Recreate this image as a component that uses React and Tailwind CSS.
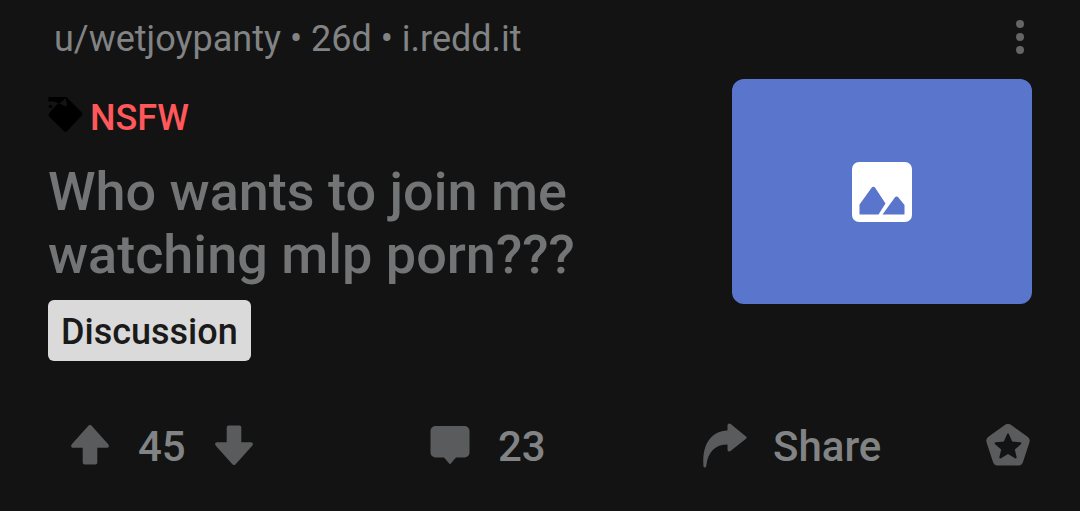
const UpArrow = ({ className = '' }) => (
  <svg className={className} width="38" height="40" viewBox="0 0 38 40" fill="currentColor" aria-hidden="true">
    <path d="M17.6.6a2 2 0 0 1 2.8 0L37.2 19.2c1.4 1.7.6 3.5-1.4 3.5H26.3v14.9a2 2 0 0 1-2 2H13.7a2 2 0 0 1-2-2V22.7H2.2c-2 0-2.8-1.8-1.4-3.5z" />
  </svg>
);

const Tag = () => (
  <svg width="35" height="36" viewBox="0 0 35 36" aria-hidden="true">
    <path fill="#000" d="M.5 0h18l15.200 15.600a2 2 0 0 1 0 2.800L19 34.200a2 2 0 0 1-2.800 0L1 19.500c-.7-.8-.7-1.600 0-2.400L.5 4.500z" />
    <path fill="#131313" d="M0 5C2 3.500 6 4 10.500 6.200 8 8.500 5 11 1.500 16L0 18z" />
    <path fill="#131313" d="M11 6.200C14 5 15.500 3 17.500 1c.5 2 1.500 5 1.500 7.500-1.500 1-3 .5-4.500-.5z" />
    <circle cx="2.500" cy="9.500" r="1.800" fill="#000" />
  </svg>
);

const Comment = () => (
  <svg width="40" height="40" viewBox="0 0 40 40" fill="currentColor" aria-hidden="true">
    <path d="M5.500 1h29a5 5 0 0 1 5 5v21.500a5 5 0 0 1-5 5H26L20.800 38.400a1 1 0 0 1-1.600 0L14 32.500H5.500a5 5 0 0 1-5-5V6a5 5 0 0 1 5-5z" />
  </svg>
);

const ShareArrow = () => (
  <svg width="44" height="46" viewBox="0 0 44 46" fill="currentColor" aria-hidden="true">
    <path d="M24.500 3.500c0-1.900 1.800-2.700 3.200-1.500L43 14.500c.9.700.9 1.500 0 2.200L27.500 29c-1.400 1.200-3 .4-3-1.400V22.500C12.500 22.500 5 29.500 3.300 43.500c-.2 2.800-2.800 2.800-2.900 0C-.8 22.500 7.500 9.500 24.500 8.500z" />
  </svg>
);

const Award = () => (
  <svg width="44" height="42" viewBox="0 0 44 42" fill="currentColor" aria-hidden="true">
    <path fillRule="evenodd" d="M18.800 1.100a5 5 0 0 1 6.400 0L41.600 12.800a5 5 0 0 1 1.800 5.600L37 38a5 5 0 0 1-4.800 3.500H11.800A5 5 0 0 1 7 38L.6 18.400a5 5 0 0 1 1.800-5.600zM20.900 10.400 17.800 17.500 9.800 18.300c-1.300.2-1.500 1.200-.7 1.900l6.100 5.300-1.800 7.600c-.2 1.200.6 1.700 1.600 1.200l7-4.200 7 4.200c1 .5 1.800 0 1.600-1.200l-1.800-7.600 6.100-5.300c.8-.7.6-1.700-.7-1.900l-8-.8-3.100-7.100c-.5-1.100-1.700-1.100-2.200 0z" />
  </svg>
);

const ImageIcon = () => (
  <svg width="60" height="60" viewBox="0 0 60 60" aria-hidden="true">
    <rect width="60" height="60" rx="7" fill="#fff" />
    <path fill="#5a75cc" d="M7.500 42.500 19.800 25.500a2 2 0 0 1 3.200 0L33.500 41.500 26.500 52.500h-19zM30.500 52.500 43 35.300a2 2 0 0 1 3.200 0L52.500 43v9.500z" />
  </svg>
);

export default function App() {
  return (
    <article className="flex min-h-screen flex-col bg-[#131313] px-12 font-['Roboto',sans-serif] text-[#818384]">
      <header className="flex h-[78px] items-center justify-between pl-[6px] text-4xl">
        <p>u/wetjoypanty • 26d • i.redd.it</p>
        <button type="button" aria-label="More options" className="pb-1 text-[#646566]">
          <svg width="24" height="36" viewBox="0 0 24 36" fill="currentColor" aria-hidden="true">
            <circle cx="12" cy="5" r="4" />
            <circle cx="12" cy="18" r="4" />
            <circle cx="12" cy="31" r="4" />
          </svg>
        </button>
      </header>

      <div className="flex items-start justify-between gap-6 pt-px">
        <div className="flex min-w-0 flex-1 flex-col items-start pt-[18px]">
          <div className="flex items-start gap-[7px] text-4xl font-medium text-[#ff585b]">
            <Tag />
            <span className="pt-px">NSFW</span>
          </div>
          <h1 className="mt-[22px] max-w-[600px] text-[54px] leading-[63px] font-medium text-[#737475]">
            Who wants to join me watching mlp porn???
          </h1>
          <span className="mt-[14px] rounded-md bg-[#dadada] px-[13px] pt-3 pb-[9px] text-4xl font-medium text-[#1a1a1b]">
            Discussion
          </span>
        </div>
        <div className="flex h-[225px] w-[300px] shrink-0 items-center justify-center rounded-xl bg-[#5a75cc]">
          <ImageIcon />
        </div>
      </div>

      <footer className="mt-12 grid h-[72px] grid-cols-[382fr_273fr_283fr_46fr] items-center text-[42px] font-medium">
        <div className="flex items-center gap-[29px] pl-[23px]">
          <button type="button" aria-label="Upvote" className="text-[#5a5b5c]"><UpArrow /></button>
          <span className="pt-[2px]">45</span>
          <button type="button" aria-label="Downvote" className="text-[#5a5b5c]"><UpArrow className="rotate-180" /></button>
        </div>
        <button type="button" className="flex items-center gap-7">
          <span className="text-[#5a5b5c]"><Comment /></span>
          <span className="pt-[2px]">23</span>
        </button>
        <button type="button" className="flex items-center gap-[26px]">
          <span className="text-[#5a5b5c]"><ShareArrow /></span>
          <span className="pt-[2px]">Share</span>
        </button>
        <button type="button" aria-label="Give award" className="text-[#5a5b5c]"><Award /></button>
      </footer>
    </article>
  );
}
